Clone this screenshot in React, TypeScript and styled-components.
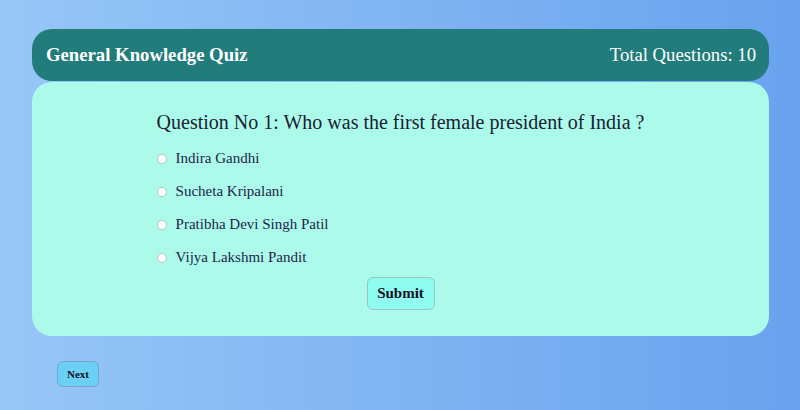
import React from "react";
import styled, { createGlobalStyle } from "styled-components";

const Global = createGlobalStyle`
  html, body { margin: 0; padding: 0; }
  body {
    min-height: 410px;
    background: linear-gradient(to right, #97c7f7, #69a2ee);
    font-family: "Liberation Serif", "Times New Roman", serif;
  }
`;

const Page = styled.div`
  width: 800px;
  height: 410px;
  padding-top: 29px;
  box-sizing: border-box;
`;

const Wrapper = styled.div`
  width: 737px;
  margin: 0 auto 0 32px;
  display: flex;
  flex-direction: column;
  gap: 1px;
`;

const Header = styled.header`
  height: 52px;
  background: #217c7b;
  border-radius: 20px;
  display: flex;
  align-items: center;
  justify-content: space-between;
  padding: 0 13px 0 14px;
  color: #ffffff;
`;

const Title = styled.h1`
  margin: 0;
  font-size: 18.72px;
  font-weight: bold;
`;

const Total = styled.span`
  font-size: 18.72px;
`;

const Card = styled.main`
  height: 254px;
  background: #acfbea;
  border-radius: 20px;
  display: flex;
  flex-direction: column;
  align-items: center;
  padding-top: 28px;
  box-sizing: border-box;
`;

const Block = styled.div`
  display: flex;
  flex-direction: column;
`;

const Question = styled.h2`
  margin: 0 0 8px 0;
  font-size: 20px;
  font-weight: normal;
  color: #1c1c34;
  line-height: 24px;
`;

const Option = styled.label`
  display: flex;
  align-items: center;
  height: 33px;
  font-size: 15px;
  color: #23234a;
`;

const Radio = styled.input`
  appearance: none;
  width: 10px;
  height: 10px;
  margin: 0 9px 0 0;
  border-radius: 50%;
  border: 1px solid #b9c4c1;
  background: #ffffff;
  box-sizing: border-box;
`;

const SubmitRow = styled.div`
  display: flex;
  justify-content: center;
  margin-top: 3px;
`;

const SubmitButton = styled.button`
  width: 68px;
  height: 33px;
  background: #8ffcf0;
  border: 1px solid #9cc4c0;
  border-radius: 6px;
  font-family: "Liberation Serif", "Times New Roman", serif;
  font-weight: bold;
  font-size: 15px;
  color: #111122;
  padding: 0;
`;

const NextButton = styled.button`
  margin: 25px 0 0 57px;
  width: 42px;
  height: 26px;
  background: #6ccff6;
  border: 1px solid #7aa6c6;
  border-radius: 6px;
  font-family: "Liberation Serif", "Times New Roman", serif;
  font-weight: bold;
  font-size: 11px;
  color: #111122;
  padding: 0;
`;

const options = [
  "Indira Gandhi",
  "Sucheta Kripalani",
  "Pratibha Devi Singh Patil",
  "Vijya Lakshmi Pandit",
];

export default function App() {
  return (
    <Page>
      <Global />
      <Wrapper>
        <Header>
          <Title>General Knowledge Quiz</Title>
          <Total>Total Questions: 10</Total>
        </Header>
        <Card>
          <Block>
            <Question>Question No 1: Who was the first female president of India ?</Question>
            {options.map((o) => (
              <Option key={o}>
                <Radio type="radio" name="q1" />
                {o}
              </Option>
            ))}
          </Block>
          <SubmitRow>
            <SubmitButton>Submit</SubmitButton>
          </SubmitRow>
        </Card>
      </Wrapper>
      <NextButton>Next</NextButton>
    </Page>
  );
}
